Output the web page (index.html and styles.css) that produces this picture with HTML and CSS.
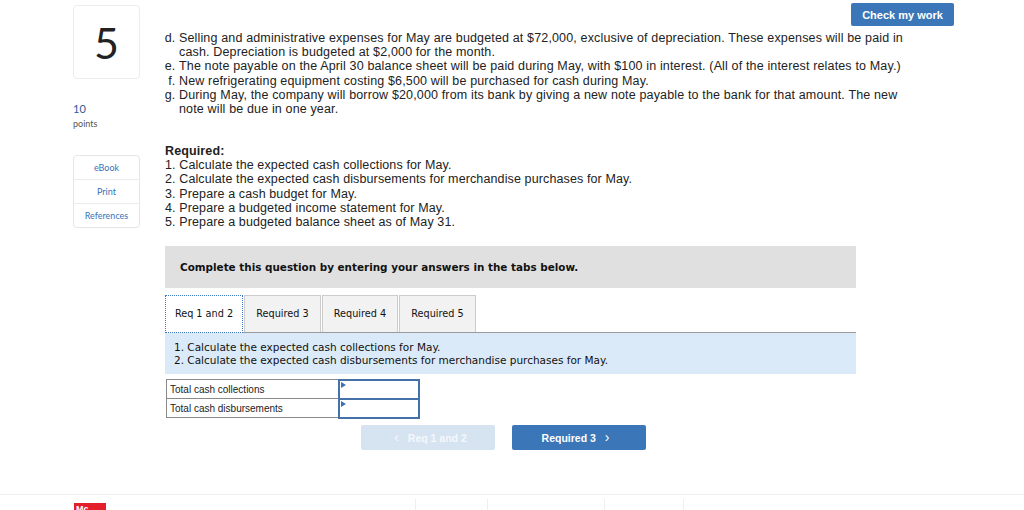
FILE: index.html
```html
<!DOCTYPE html>
<html>
<head>
<meta charset="utf-8">
<link rel="stylesheet" href="styles.css">
</head>
<body>
<div class="page">
  <aside class="side">
    <div class="qnum">5</div>
    <div class="pts">
      <div class="pts-n">10</div>
      <div class="pts-l">points</div>
    </div>
    <div class="links">
      <div class="link">eBook</div>
      <div class="link">Print</div>
      <div class="link">References</div>
    </div>
  </aside>
  <main class="main">
    <div class="top">
      <button class="check">Check my work</button>
    </div>
    <ol class="items" type="a" start="4">
      <li>Selling and administrative expenses for May are budgeted at $72,000, exclusive of depreciation. These expenses will be paid in cash. Depreciation is budgeted at $2,000 for the month.</li>
      <li>The note payable on the April 30 balance sheet will be paid during May, with $100 in interest. (All of the interest relates to May.)</li>
      <li>New refrigerating equipment costing $6,500 will be purchased for cash during May.</li>
      <li>During May, the company will borrow $20,000 from its bank by giving a new note payable to the bank for that amount. The new note will be due in one year.</li>
    </ol>
    <div class="req">
      <div class="req-h">Required:</div>
      <div>1. Calculate the expected cash collections for May.</div>
      <div>2. Calculate the expected cash disbursements for merchandise purchases for May.</div>
      <div>3. Prepare a cash budget for May.</div>
      <div>4. Prepare a budgeted income statement for May.</div>
      <div>5. Prepare a budgeted balance sheet as of May 31.</div>
    </div>
    <div class="work">
      <div class="instr">Complete this question by entering your answers in the tabs below.</div>
      <div class="tabs">
        <div class="tab active">Req 1 and 2</div>
        <div class="tab">Required 3</div>
        <div class="tab">Required 4</div>
        <div class="tab">Required 5</div>
      </div>
      <div class="prompt">
        <div>1. Calculate the expected cash collections for May.</div>
        <div>2. Calculate the expected cash disbursements for merchandise purchases for May.</div>
      </div>
      <table class="ans">
        <tr><td class="lbl">Total cash collections</td><td class="inp"><span class="flag"></span></td></tr>
        <tr><td class="lbl">Total cash disbursements</td><td class="inp"><span class="flag"></span></td></tr>
      </table>
      <div class="nav">
        <button class="nb prev"><span class="chev">&lsaquo;</span> Req 1 and 2</button>
        <button class="nb next">Required 3 <span class="chev">&rsaquo;</span></button>
      </div>
    </div>
  </main>
</div>
<footer class="foot">
  <div class="logo">Mc</div>
  <div class="seps">
    <span class="sep s1"></span><span class="sep s2"></span><span class="sep s3"></span><span class="sep s4"></span>
  </div>
</footer>
</body>
</html>
```
FILE: styles.css
```css
* { box-sizing: border-box; }
html, body { margin: 0; padding: 0; background: #fff; }
body { font-family: "Liberation Sans", Arial, sans-serif; color: #222; width: 1024px; height: 510px; overflow: hidden; }

.page { display: flex; padding-left: 73px; height: 494px; }
.side { width: 67px; flex: none; font-family: Lato, "Open Sans", sans-serif; }
.qnum {
  width: 67px; height: 74px; margin-top: 5px;
  border: 1px solid #ececec; border-radius: 4px;
  display: flex; align-items: center; justify-content: center;
  font-size: 43px; color: #222; font-weight: 400;
}
.pts { margin-top: 23px; }
.pts-n { font-size: 11px; color: #2b5b98; line-height: 13px; }
.pts-l { font-size: 9px; color: #555; line-height: 12px; margin-top: 3px; }
.links {
  margin-top: 25px; border: 1px solid #e6e6e6; border-radius: 4px;
  font-size: 9px; color: #3a72b5; text-align: center;
}
.link { height: 24px; line-height: 24px; border-top: 1px solid #ececec; }
.link:first-child { border-top: none; height: 23px; }

.main { flex: 1; margin-left: 25px; padding-right: 70px; }
.top { display: flex; justify-content: flex-end; padding-top: 3px; height: 26px; }
.check {
  background: #3a76b8; color: #fff; border: none; border-radius: 2px;
  font-family: "Liberation Sans", Arial, sans-serif; font-weight: bold; font-size: 11px;
  width: 103px; height: 23px; padding: 0;
}
.items {
  width: 750px;
  margin: 5px 0 0 0; padding-left: 14px;
  font-size: 12.5px; line-height: 14.2px; color: #222; letter-spacing: 0.15px;
}
.req { margin-top: 28px; font-size: 12.5px; line-height: 14.1px; letter-spacing: 0.12px; }
.req-h { font-weight: bold; }

.work { width: 691px; margin-top: 17px; }
.instr {
  background: #e0e0e0; height: 42px; padding-left: 15px;
  display: flex; align-items: center;
  font-family: "DejaVu Sans", Verdana, sans-serif; font-weight: bold; font-size: 10.4px; color: #111;
}
.tabs { display: flex; margin-top: 7px; border-bottom: 1px solid #999; height: 38px; }
.tab {
  height: 37px; padding: 0 8px; margin-right: 1px;
  background: #f2f2f2; border: 1px solid #ccc; border-bottom: none;
  display: flex; align-items: center; justify-content: center;
  font-family: "DejaVu Sans", Verdana, sans-serif; font-size: 9.7px; color: #111;
}
.tab:nth-child(2) { width: 77px; }
.tab:nth-child(3) { width: 76px; }
.tab:nth-child(4) { width: 77px; }
.tab.active {
  width: 78px; background: #fff; border: 1px dotted #3a76b8; height: 38px;
  position: relative; z-index: 1;
}
.prompt {
  background: #dbeaf8; padding: 8px 9px 7px;
  font-family: "DejaVu Sans", Verdana, sans-serif; font-size: 10.5px; line-height: 13px; color: #111;
}
.ans { border-collapse: collapse; margin: 5px 0 0 1px; font-family: "Liberation Sans", Arial, sans-serif; font-size: 10px; color: #222; }
.ans td { height: 19px; padding: 0; }
.lbl { width: 172px; border: 1px solid #8a8a8a; padding-left: 3px !important; }
.inp { width: 80px; border: 2px solid #4472a8; position: relative; background: #fff; }
.flag {
  position: absolute; left: 1px; top: 1px; width: 0; height: 0;
  border-top: 3px solid transparent; border-bottom: 3px solid transparent; border-left: 5px solid #3d70b8;
}
.nav { display: flex; justify-content: center; gap: 17px; margin-top: 6px; padding-right: 15px; }
.nb {
  width: 134px; height: 25px; border: none; border-radius: 2px;
  font-family: "Liberation Sans", Arial, sans-serif; font-weight: bold; font-size: 10.5px; color: #fff; padding: 0;
}
.prev { background: #d6e3f1; color: #f4f8fc; }
.next { background: #3a76b8; }
.chev { font-size: 14px; font-weight: normal; margin: 0 6px; }

.foot { border-top: 1px solid #eee; height: 16px; position: relative; padding-left: 74px; }
.logo {
  margin-top: 8px; width: 32px; height: 8px; background: #e21f2b; color: #fff;
  font-family: "Liberation Sans", Arial, sans-serif; font-weight: bold; font-size: 9px; line-height: 12px; padding-left: 2px; overflow: hidden;
}
.seps { position: absolute; top: 4px; left: 0; width: 1024px; height: 12px; }
.sep { position: absolute; top: 0; width: 1px; height: 12px; background: #eee; }
.s1 { left: 415px; } .s2 { left: 487px; } .s3 { left: 604px; } .s4 { left: 683px; }
```
